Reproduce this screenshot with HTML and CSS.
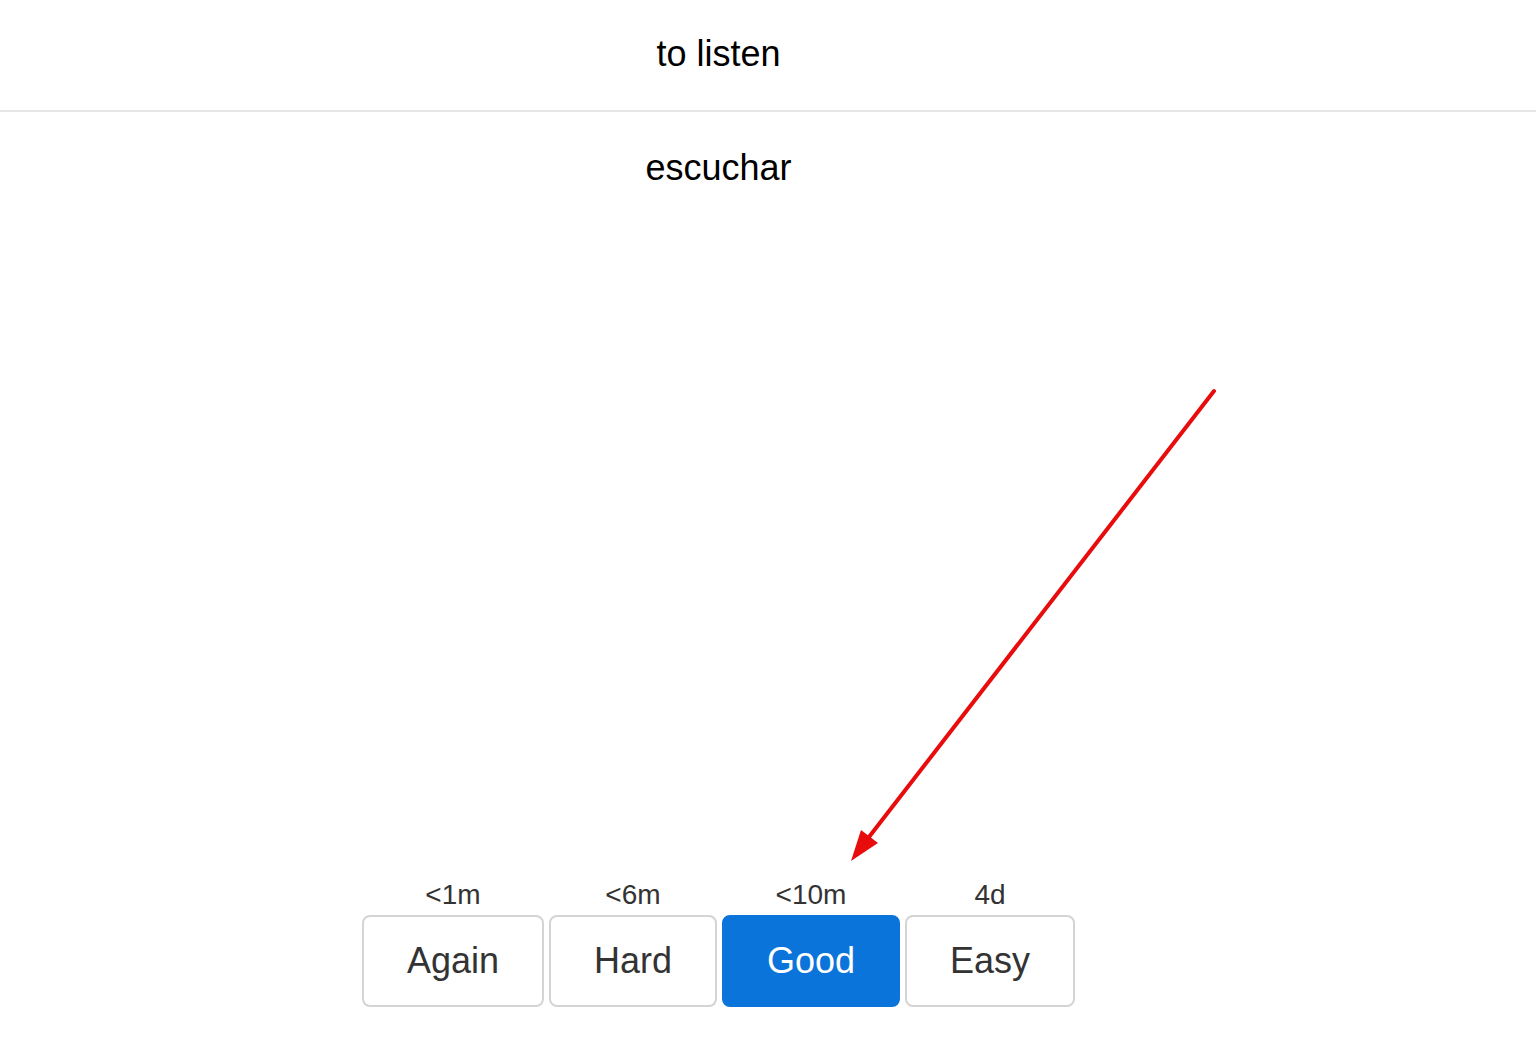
FILE: index.html
```html
<!DOCTYPE html>
<html lang="en">
<head>
  <meta charset="UTF-8">
  <title>Review</title>
  <link rel="stylesheet" href="styles.css">
</head>
<body>
  <div class="card">
    <div class="front">to listen</div>
    <hr class="answer-line">
    <div class="back">escuchar</div>
  </div>

  <div class="answer-bar">
    <div class="ease">
      <span class="due">&lt;1m</span>
      <button class="btn">Again</button>
    </div>
    <div class="ease">
      <span class="due">&lt;6m</span>
      <button class="btn">Hard</button>
    </div>
    <div class="ease">
      <span class="due">&lt;10m</span>
      <button class="btn btn-default">Good</button>
    </div>
    <div class="ease">
      <span class="due">4d</span>
      <button class="btn">Easy</button>
    </div>
  </div>

  <!-- annotation arrow pointing at the Good button -->
  <svg class="pointer" width="1536" height="1037" viewBox="0 0 1536 1037">
    <line x1="1214" y1="391" x2="869" y2="837" stroke="#e80c0c" stroke-width="4" stroke-linecap="round"/>
    <polygon points="851,861 861,830 878,843" fill="#e80c0c"/>
  </svg>
</body>
</html>
```

FILE: styles.css
```css
html,
body {
  margin: 0;
  padding: 0;
  height: 100%;
}

body {
  font-family: "Liberation Sans", Arial, Helvetica, sans-serif;
  background-color: #ffffff;
  color: #000;
  display: flex;
  flex-direction: column;
  overflow: hidden;
}

.card {
  flex: 1;
  text-align: center;
  font-size: 36px;
  line-height: 40px;
}

.front,
.back {
  width: 1437px;
}

.front {
  padding-top: 34px;
}

.answer-line {
  margin: 36px 0;
  border: none;
  height: 2px;
  background-color: #e5e5e5;
}

.answer-bar {
  width: 1437px;
  display: flex;
  justify-content: center;
  gap: 5px;
  padding-bottom: 30px;
}

.ease {
  display: flex;
  flex-direction: column;
  align-items: center;
}

.due {
  font-size: 28px;
  line-height: 32px;
  color: #333;
  margin-bottom: 4px;
}

.btn {
  height: 92px;
  padding: 0 43px;
  font-family: inherit;
  font-size: 36px;
  color: #333;
  background-color: #fff;
  border: 2px solid #d4d4d4;
  border-radius: 8px;
}

.btn-default {
  background-color: #0a74db;
  border-color: #0a74db;
  color: #fff;
}

.pointer {
  position: absolute;
  left: 0;
  top: 0;
  pointer-events: none;
}
```
